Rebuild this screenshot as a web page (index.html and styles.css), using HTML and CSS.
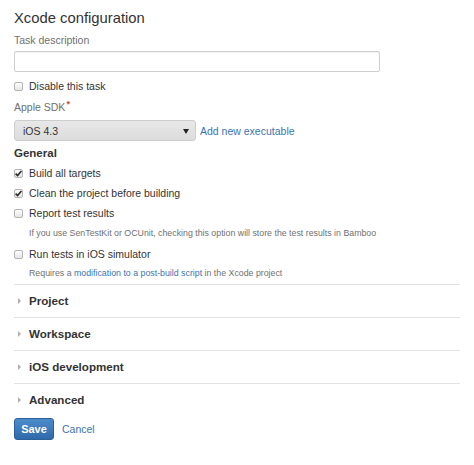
FILE: index.html
```html
<!DOCTYPE html>
<html lang="en">
<head>
<meta charset="utf-8">
<title>Xcode configuration</title>
<link rel="stylesheet" href="styles.css">
</head>
<body>
<form class="task-form">
  <h2 class="title">Xcode configuration</h2>

  <label class="field-label" for="desc">Task description</label>
  <input class="text-input" id="desc" type="text">

  <div class="check-row row-disable">
    <span class="cb"></span>
    <span class="check-label">Disable this task</span>
  </div>

  <div class="field-label sdk-label">Apple SDK<span class="req">*</span></div>
  <div class="select-row">
    <div class="select">
      <span class="select-value">iOS 4.3</span>
      <svg class="select-arrow" width="6" height="5" viewBox="0 0 6 5"><path d="M0 0h6L3 5z" fill="#222"/></svg>
    </div>
    <a class="link add-link" href="#">Add new executable</a>
  </div>

  <h3 class="group-title">General</h3>

  <div class="check-row row-build">
    <span class="cb"><svg width="9" height="9" viewBox="0 0 9 9"><path d="M1.6 4.6l2 2 3.8-4.6" fill="none" stroke="#2b2b2b" stroke-width="1.6"/></svg></span>
    <span class="check-label">Build all targets</span>
  </div>
  <div class="check-row row-next">
    <span class="cb"><svg width="9" height="9" viewBox="0 0 9 9"><path d="M1.6 4.6l2 2 3.8-4.6" fill="none" stroke="#2b2b2b" stroke-width="1.6"/></svg></span>
    <span class="check-label">Clean the project before building</span>
  </div>
  <div class="check-row row-next">
    <span class="cb"></span>
    <span class="check-label">Report test results</span>
  </div>
  <div class="help help-report">If you use SenTestKit or OCUnit, checking this option will store the test results in Bamboo</div>

  <div class="check-row row-run">
    <span class="cb"></span>
    <span class="check-label">Run tests in iOS simulator</span>
  </div>
  <div class="help help-run">Requires a <a class="link" href="#">modification to a post-build script</a> in the Xcode project</div>

  <div class="sections">
    <div class="section"><span class="twisty"></span>Project</div>
    <div class="section"><span class="twisty"></span>Workspace</div>
    <div class="section"><span class="twisty"></span>iOS development</div>
    <div class="section"><span class="twisty"></span>Advanced</div>
  </div>

  <div class="buttons">
    <button class="btn-save" type="button">Save</button>
    <a class="link cancel" href="#">Cancel</a>
  </div>
</form>
</body>
</html>
```

FILE: styles.css
```css
html, body {
  margin: 0;
  padding: 0;
  background: #fff;
}

body {
  font-family: "Liberation Sans", Arial, sans-serif;
  font-size: 10.5px;
  color: #333;
}

.task-form {
  width: 446px;
  padding: 0 14px;
}

.title {
  margin: 0;
  padding-top: 8px;
  font-size: 14.8px;
  font-weight: normal;
  line-height: 20px;
  color: #333;
}

.field-label {
  display: block;
  margin-top: 5px;
  height: 14px;
  line-height: 14px;
  color: #707070;
}

.text-input {
  display: block;
  box-sizing: border-box;
  width: 366px;
  height: 21px;
  margin: 4px 0 0;
  border: 1px solid #cfcfcf;
  border-radius: 2px;
  box-shadow: inset 0 1px 1px rgba(0, 0, 0, 0.06);
  background: #fff;
}

.check-row {
  display: flex;
  align-items: center;
  height: 14px;
  gap: 6px;
}

.row-disable { margin-top: 7px; }
.row-build { margin-top: 6px; }
.row-next { margin-top: 6px; }
.row-run { margin-top: 8px; }

.cb {
  box-sizing: border-box;
  width: 9px;
  height: 9px;
  border: 1px solid #b3b3b3;
  border-radius: 2px;
  background: linear-gradient(#fdfdfd, #e6e6e6);
  position: relative;
  flex: none;
}

.cb svg {
  position: absolute;
  left: -1px;
  top: -1px;
}

.check-label {
  line-height: 14px;
  color: #333;
}

.sdk-label {
  margin-top: 7px;
}

.req {
  color: #d04437;
  font-size: 9px;
  font-weight: bold;
  line-height: 0;
  vertical-align: 4px;
  margin-left: 1px;
}

.select-row {
  display: flex;
  align-items: center;
  gap: 4px;
  margin-top: 6px;
  height: 21px;
}

.select {
  box-sizing: border-box;
  width: 182px;
  height: 21px;
  display: flex;
  align-items: center;
  justify-content: space-between;
  padding: 0 6px 0 8px;
  border: 1px solid #cdcdcd;
  border-radius: 3px;
  background: linear-gradient(#e8e8e8, #dcdcdc);
  color: #333;
}

.select-arrow {
  margin-top: 1px;
}

.link {
  color: #3b73af;
  text-decoration: none;
}

.group-title {
  margin: 5px 0 0;
  font-size: 11.5px;
  font-weight: bold;
  line-height: 14px;
  color: #333;
}

.help {
  padding-left: 15px;
  font-size: 8.8px;
  line-height: 12px;
  color: #707070;
}

.help-report { margin-top: 7px; }
.help-run { margin-top: 6px; }

.sections {
  margin-top: 5px;
  border-top: 1px solid #e3e3e3;
}

.section {
  display: flex;
  align-items: center;
  height: 32px;
  padding-bottom: 1px;
  box-sizing: border-box;
  border-bottom: 1px solid #e3e3e3;
  font-size: 11.6px;
  font-weight: bold;
  color: #333;
}

.section:not(:last-child) {
  height: 33px;
}

.section:last-child {
  border-bottom: none;
}

.twisty {
  width: 0;
  height: 0;
  margin: 0 8px 0 4px;
  border-top: 3px solid transparent;
  border-bottom: 3px solid transparent;
  border-left: 3px solid #b0b0b0;
}

.buttons {
  display: flex;
  align-items: center;
  gap: 8px;
  margin-top: 2px;
}

.btn-save {
  box-sizing: border-box;
  width: 40px;
  height: 22px;
  padding: 0;
  border: 1px solid #2d609a;
  border-radius: 3px;
  background: linear-gradient(#4d8ccb, #2f6aa9);
  color: #fff;
  font-family: "Liberation Sans", Arial, sans-serif;
  font-size: 11px;
  font-weight: bold;
}

.cancel {
  font-size: 10.5px;
}
```
